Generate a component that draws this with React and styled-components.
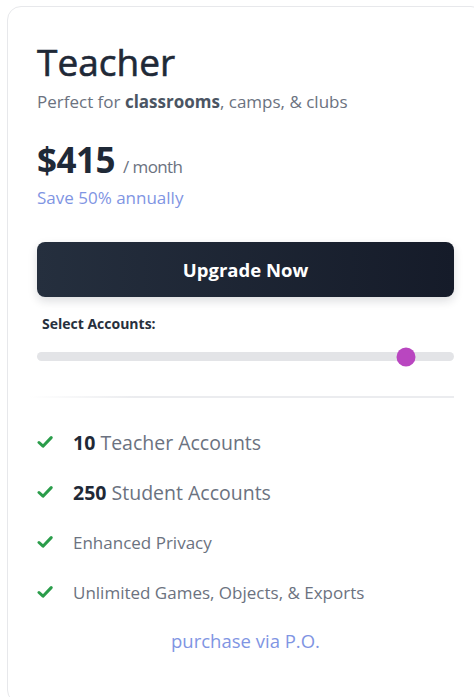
import styled, { createGlobalStyle } from "styled-components";

const GlobalStyle = createGlobalStyle`
  html, body {
    margin: 0;
    padding: 0;
    background: #ffffff;
    overflow: hidden;
  }
  body {
    font-family: "Open Sans", "Noto Sans", sans-serif;
  }
`;

const features = [
  { strong: "10", text: "Teacher Accounts", big: true },
  { strong: "250", text: "Student Accounts", big: true },
  { text: "Enhanced Privacy" },
  { text: "Unlimited Games, Objects, & Exports" },
];

function Check() {
  return (
    <svg width="16" height="14" viewBox="0 0 16 14">
      <path
        d="M2 7.5 L6 11.2 L14.2 2.6"
        fill="none"
        stroke="#2a9d4a"
        strokeWidth="3"
        strokeLinecap="round"
        strokeLinejoin="round"
      />
    </svg>
  );
}

function App() {
  return (
    <Page>
      <GlobalStyle />
      <Card>
        <Title>Teacher</Title>
        <Subtitle>
          Perfect for <b>classrooms</b>, camps, &amp; clubs
        </Subtitle>
        <PriceRow>
          <Price>$415</Price>
          <Per>/ month</Per>
        </PriceRow>
        <Save>Save 50% annually</Save>
        <UpgradeButton>Upgrade Now</UpgradeButton>
        <SelectLabel>Select Accounts:</SelectLabel>
        <Track>
          <Thumb style={{ left: "88.4%" }} />
        </Track>
        <Divider />
        <FeatureList>
          {features.map((f) => (
            <Feature key={f.text} $big={f.big}>
              <Check />
              <span>
                {f.strong && <strong>{f.strong} </strong>}
                {f.text}
              </span>
            </Feature>
          ))}
        </FeatureList>
        <PurchaseLink>purchase via P.O.</PurchaseLink>
      </Card>
    </Page>
  );
}

const Page = styled.div`
  width: 474px;
  height: 697px;
  padding: 6px 0 0 7px;
  box-sizing: border-box;
`;

const Card = styled.div`
  width: 478px;
  height: 698px;
  box-sizing: border-box;
  border: 1px solid #e7e8eb;
  border-radius: 14px;
  padding: 32px 30px 0 29px;
  display: flex;
  flex-direction: column;
`;

const Title = styled.h1`
  margin: 0;
  font-size: 37px;
  font-weight: 400;
  line-height: 46px;
  color: #1f2937;
  -webkit-text-stroke: 0.6px #1f2937;
`;

const Subtitle = styled.p`
  margin: 5px 0 0;
  font-size: 17px;
  line-height: 24px;
  color: #6b7280;
  b {
    color: #4b5563;
    font-weight: 700;
  }
`;

const PriceRow = styled.div`
  display: flex;
  align-items: baseline;
  gap: 8px;
  margin-top: 23px;
`;

const Price = styled.span`
  font-size: 35px;
  font-weight: 700;
  line-height: 46px;
  color: #1f2937;
  letter-spacing: -0.5px;
`;

const Per = styled.span`
  font-size: 17px;
  color: #6b7280;
  letter-spacing: -0.6px;
`;

const Save = styled.div`
  margin-top: 3px;
  font-size: 17px;
  line-height: 24px;
  color: #7f95e3;
`;

const UpgradeButton = styled.button`
  margin-top: 32px;
  height: 55px;
  width: 100%;
  border: none;
  border-radius: 8px;
  background: linear-gradient(90deg, #252f3e, #151b29);
  color: #ffffff;
  font-family: inherit;
  font-size: 18.5px;
  font-weight: 700;
  box-shadow: 0 4px 10px rgba(17, 24, 39, 0.15);
`;

const SelectLabel = styled.div`
  margin: 18px 0 0 5px;
  font-size: 14px;
  line-height: 18px;
  font-weight: 700;
  color: #27303d;
`;

const Track = styled.div`
  position: relative;
  margin-top: 19px;
  height: 9px;
  border-radius: 5px;
  background: #e3e4e7;
`;

const Thumb = styled.div`
  position: absolute;
  top: 50%;
  width: 19px;
  height: 19px;
  border-radius: 50%;
  background: #b946c0;
  transform: translate(-50%, -50%);
`;

const Divider = styled.div`
  margin: 35px 0 0 -8px;
  height: 2px;
  background: linear-gradient(90deg, rgba(235, 236, 239, 0), #ebecef 25%, #ebecef);
`;

const FeatureList = styled.ul`
  list-style: none;
  margin: 31px 0 0;
  padding: 0;
  display: flex;
  flex-direction: column;
  gap: 24px;
`;

const Feature = styled.li`
  display: flex;
  align-items: center;
  gap: 20px;
  height: 26px;
  font-size: ${(p) => (p.$big ? "19.5px" : "17px")};
  color: #6b7280;
  svg {
    flex: none;
  }
  strong {
    color: #1f2937;
    font-weight: 700;
  }
`;

const PurchaseLink = styled.div`
  margin-top: 23px;
  text-align: center;
  font-size: 18.5px;
  color: #7f95e3;
`;

export default App;
